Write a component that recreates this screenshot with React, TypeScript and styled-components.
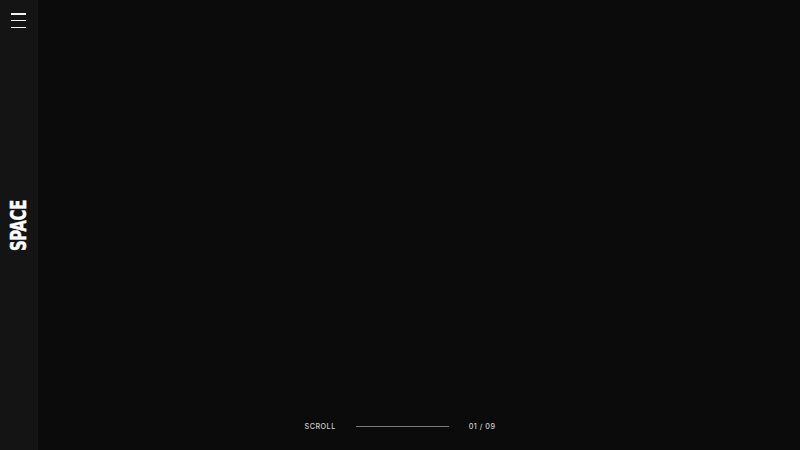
import React from "react";
import styled, { createGlobalStyle } from "styled-components";

const Global = createGlobalStyle`
  html, body { margin: 0; padding: 0; background: #0b0b0b; }
  #root { height: 100vh; }
`;

const Page = styled.div`
  display: grid;
  grid-template-columns: 38px 1fr;
  grid-template-rows: 1fr 48px;
  width: 100vw;
  height: 100vh;
  background: #0b0b0b;
  overflow: hidden;
  font-family: "Inter", "Liberation Sans", sans-serif;
`;

const Sidebar = styled.aside`
  grid-column: 1;
  grid-row: 1 / -1;
  background: #141414;
  border-right: 1px solid #171717;
  box-sizing: border-box;
  display: flex;
  flex-direction: column;
  align-items: center;
`;

const MenuButton = styled.button`
  margin-top: 13px;
  width: 15px;
  height: 15px;
  padding: 0;
  border: 0;
  background: transparent;
  display: flex;
  flex-direction: column;
  justify-content: space-between;
  cursor: pointer;
`;

const MenuLine = styled.span`
  display: block;
  width: 15px;
  height: 1.5px;
  background: #f2f2f2;
`;

const BrandWrap = styled.div`
  flex: 1;
  display: flex;
  align-items: center;
  justify-content: center;
  margin-top: -28px;
`;

const Brand = styled.div`
  transform: rotate(-90deg) scaleX(0.78);
  color: #ffffff;
  font-family: "DejaVu Sans Condensed", "DejaVu Sans", sans-serif;
  font-weight: 700;
  font-size: 21px;
  letter-spacing: -0.3px;
  line-height: 1;
  white-space: nowrap;
  margin-left: 3px;
  -webkit-text-stroke: 0.5px #ffffff;
`;

const Main = styled.main`
  grid-column: 2;
  grid-row: 1;
`;

const Footer = styled.footer`
  grid-column: 1 / -1;
  grid-row: 2;
  display: flex;
  align-items: center;
  justify-content: center;
  gap: 20px;
  margin-top: 1px;
  margin-left: 0px;
`;

const Label = styled.span`
  color: #cfcfcf;
  font-size: 7.2px;
  letter-spacing: 0.5px;
  font-weight: 500;
`;

const Track = styled.span`
  display: block;
  width: 93px;
  height: 1px;
  background: #7a7a7a;
`;

export default function App() {
  return (
    <>
      <Global />
      <Page>
        <Sidebar>
          <MenuButton aria-label="Menu">
            <MenuLine />
            <MenuLine />
            <MenuLine />
          </MenuButton>
          <BrandWrap>
            <Brand>SPACE</Brand>
          </BrandWrap>
        </Sidebar>
        <Main />
        <Footer>
          <Label>SCROLL</Label>
          <Track />
          <Label>01 / 09</Label>
        </Footer>
      </Page>
    </>
  );
}
